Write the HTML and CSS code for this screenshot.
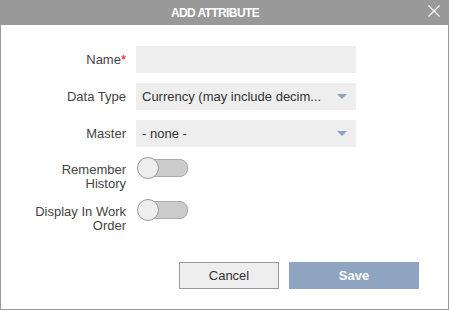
FILE: index.html
```html
<!DOCTYPE html>
<html>
<head>
<meta charset="utf-8">
<link rel="stylesheet" href="styles.css">
</head>
<body>
<div class="dialog">
  <div class="header">
    <span class="title">ADD ATTRIBUTE</span>
    <svg class="close" width="12" height="12" viewBox="0 0 12 12"><path d="M0.5 0.5L11.5 11.5M11.5 0.5L0.5 11.5" stroke="#fff" stroke-width="1.1" fill="none"/></svg>
  </div>
  <div class="form">
    <div class="row">
      <label class="label">Name<span class="req">*</span></label>
      <div class="input"></div>
    </div>
    <div class="row">
      <label class="label">Data Type</label>
      <div class="select"><span class="value">Currency (may include decim...</span><span class="arrow"></span></div>
    </div>
    <div class="row">
      <label class="label">Master</label>
      <div class="select"><span class="value">- none -</span><span class="arrow"></span></div>
    </div>
    <div class="row row-toggle">
      <label class="label label-multi">Remember<br>History</label>
      <div class="toggle"><span class="knob"></span></div>
    </div>
    <div class="row row-toggle">
      <label class="label label-multi">Display In Work<br>Order</label>
      <div class="toggle"><span class="knob"></span></div>
    </div>
  </div>
  <div class="footer">
    <button class="btn btn-cancel">Cancel</button>
    <button class="btn btn-save">Save</button>
  </div>
</div>
</body>
</html>
```
FILE: styles.css
```css
* { box-sizing: border-box; }
html, body { margin: 0; padding: 0; background: #fff; }
body { font-family: "Liberation Sans", Arial, sans-serif; font-size: 13px; color: #444; }

.dialog {
  width: 449px;
  height: 310px;
  border: 1px solid #999;
  border-top: 0;
  display: flex;
  flex-direction: column;
}
.header {
  height: 25px;
  background: #999;
  display: flex;
  align-items: center;
  justify-content: center;
  padding-right: 19px;
  position: relative;
}
.title {
  color: #fff;
  font-weight: bold;
  font-size: 12px;
  letter-spacing: -0.6px;
}
.close {
  position: absolute;
  right: 8px;
  top: 5px;
}
.form {
  padding-top: 21px;
  display: flex;
  flex-direction: column;
  gap: 10px;
}
.row {
  display: grid;
  grid-template-columns: 125px 220px;
  column-gap: 10px;
  align-items: center;
}
.label {
  text-align: right;
  color: #444;
  white-space: nowrap;
}
.req { color: #e00; }
.input, .select {
  height: 27px;
  background: #eee;
}
.select {
  display: flex;
  align-items: center;
  justify-content: space-between;
  padding: 0 9px 0 6px;
  color: #333;
}
.arrow {
  width: 0;
  height: 0;
  border-left: 5px solid transparent;
  border-right: 5px solid transparent;
  border-top: 5px solid #8fa3bf;
}
.row-toggle {
  align-items: start;
  grid-template-rows: 32px;
}
.label-multi {
  padding-top: 6px;
  line-height: 14px;
}
.toggle {
  margin-top: 1px;
  width: 52px;
  height: 20px;
  position: relative;
  display: flex;
  align-items: center;
}
.toggle::before {
  content: "";
  display: block;
  margin-left: 3px;
  width: 50px;
  height: 16px;
  background: #ccc;
  border: 1px solid #aaa;
  border-radius: 8px;
}
.knob {
  position: absolute;
  left: 1px;
  top: -1px;
  width: 22px;
  height: 22px;
  border-radius: 50%;
  background: #eee;
  border: 1px solid #999;
}
.footer {
  margin-top: auto;
  padding: 0 29px 20px 0;
  display: flex;
  justify-content: flex-end;
  gap: 10px;
}
.btn {
  height: 27px;
  font-family: "Liberation Sans", Arial, sans-serif;
  font-size: 13px;
  border-radius: 0;
  padding: 0;
}
.btn-cancel {
  width: 100px;
  background: #eee;
  border: 1px solid #999;
  color: #333;
}
.btn-save {
  width: 130px;
  background: #8fa4c0;
  border: 1px solid #8fa4c0;
  color: #fff;
  font-weight: bold;
}
```
